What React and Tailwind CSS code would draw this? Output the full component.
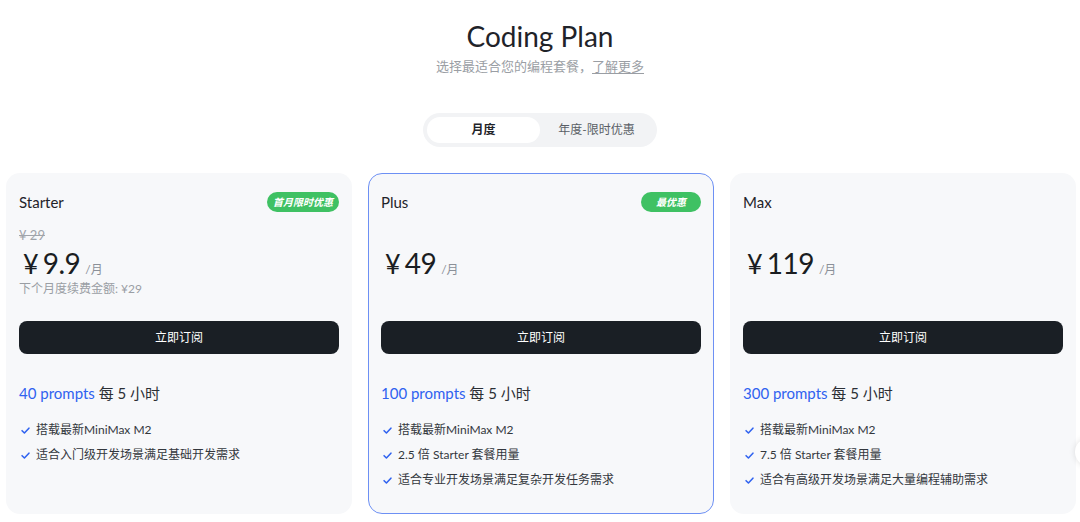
import React from 'react';

const plans = [
  {
    name: 'Starter',
    badge: '首月限时优惠',
    oldPrice: '¥ 29',
    price: '9.9',
    renew: '下个月度续费金额: ¥29',
    prompts: '40 prompts',
    features: ['搭载最新MiniMax M2', '适合入门级开发场景满足基础开发需求'],
  },
  {
    name: 'Plus',
    badge: '最优惠',
    price: '49',
    prompts: '100 prompts',
    highlight: true,
    features: ['搭载最新MiniMax M2', '2.5 倍 Starter 套餐用量', '适合专业开发场景满足复杂开发任务需求'],
  },
  {
    name: 'Max',
    price: '119',
    prompts: '300 prompts',
    features: ['搭载最新MiniMax M2', '7.5 倍 Starter 套餐用量', '适合有高级开发场景满足大量编程辅助需求'],
  },
];

const Check = () => (
  <svg width="9" height="9" viewBox="0 0 10 10" className="shrink-0">
    <path d="M1.2 5.2 L3.8 7.8 L8.8 2.4" fill="none" stroke="#2f62f0" strokeWidth="1.7" strokeLinecap="round" strokeLinejoin="round" />
  </svg>
);

const PlanCard = ({ plan }) => (
  <div
    className={`h-[341px] w-[346px] rounded-[14px] bg-[#f7f8fa] px-[12px] pt-[18px] ${
      plan.highlight ? 'border border-[#6d90f4]' : 'border border-transparent'
    }`}
  >
    <div className="flex h-[20px] items-center justify-between">
      <span className="text-[15px] text-[#1f2329]">{plan.name}</span>
      {plan.badge && (
        <span className="flex h-[20px] min-w-[60px] items-center justify-center rounded-full bg-[#3fc163] px-[6px] text-[10px] font-bold italic text-white">
          {plan.badge}
        </span>
      )}
    </div>

    <div className="mt-[13px] h-[20px] text-[13px] leading-[20px] text-[#a0a4aa] line-through">
      {plan.oldPrice}
    </div>
    <div className="flex h-[36px] items-baseline pl-[4px]">
      <span className="text-[27px] leading-[36px] text-[#1a1d21]">¥</span>
      <span className="ml-[4px] text-[28px] leading-[36px] tracking-[-0.5px] text-[#1a1d21]">{plan.price}</span>
      <span className="ml-[5px] text-[12px] text-[#8b9098]">/月</span>
    </div>
    <div className="h-[16px] text-[12px] leading-[16px] text-[#9a9ea4]">{plan.renew}</div>

    <button className="mt-[24px] flex h-[33px] w-full items-center justify-center rounded-[8px] bg-[#1a1f25] text-[12px] text-white">
      立即订阅
    </button>

    <div className="mt-[29px] h-[20px] text-[15px] leading-[20px] text-[#2b2f35]">
      <span className="text-[#2f62f0]">{plan.prompts}</span> 每 5 小时
    </div>

    <ul className="mt-[17px] flex flex-col gap-[5px]">
      {plan.features.map((f) => (
        <li key={f} className="flex h-[20px] items-center gap-[6px] pl-[2px] text-[12px] text-[#33373d]">
          <Check />
          <span>{f}</span>
        </li>
      ))}
    </ul>
  </div>
);

export default function App() {
  return (
    <div
      className="relative h-[522px] w-[1080px] overflow-hidden bg-white"
      style={{ fontFamily: 'Lato, "Noto Sans CJK SC", sans-serif' }}
    >
      <div className="flex flex-col items-center pt-[18px]">
        <h1 className="text-[28px] leading-[36px] text-[#1f2329]">Coding Plan</h1>
        <p className="mt-[2px] text-[13px] leading-[20px] text-[#9a9ea4]">
          选择最适合您的编程套餐，<span className="underline underline-offset-2">了解更多</span>
        </p>

        <div className="mt-[37px] flex h-[34px] items-center rounded-full bg-[#f2f3f5] p-[4px]">
          <div className="flex h-[26px] w-[113px] items-center justify-center rounded-full bg-white text-[12px] font-bold text-[#1f2329]">
            月度
          </div>
          <div className="flex h-[26px] w-[113px] items-center justify-center text-[12px] text-[#5a5f66]">
            年度-限时优惠
          </div>
        </div>
      </div>

      <div className="mt-[26px] flex gap-[16px] pl-[6px]">
        {plans.map((p) => (
          <PlanCard key={p.name} plan={p} />
        ))}
      </div>

      <div className="absolute left-[1075px] top-[438px] h-[28px] w-[28px] rounded-full bg-white shadow-[0_0_6px_rgba(0,0,0,0.12)]" />
    </div>
  );
}
